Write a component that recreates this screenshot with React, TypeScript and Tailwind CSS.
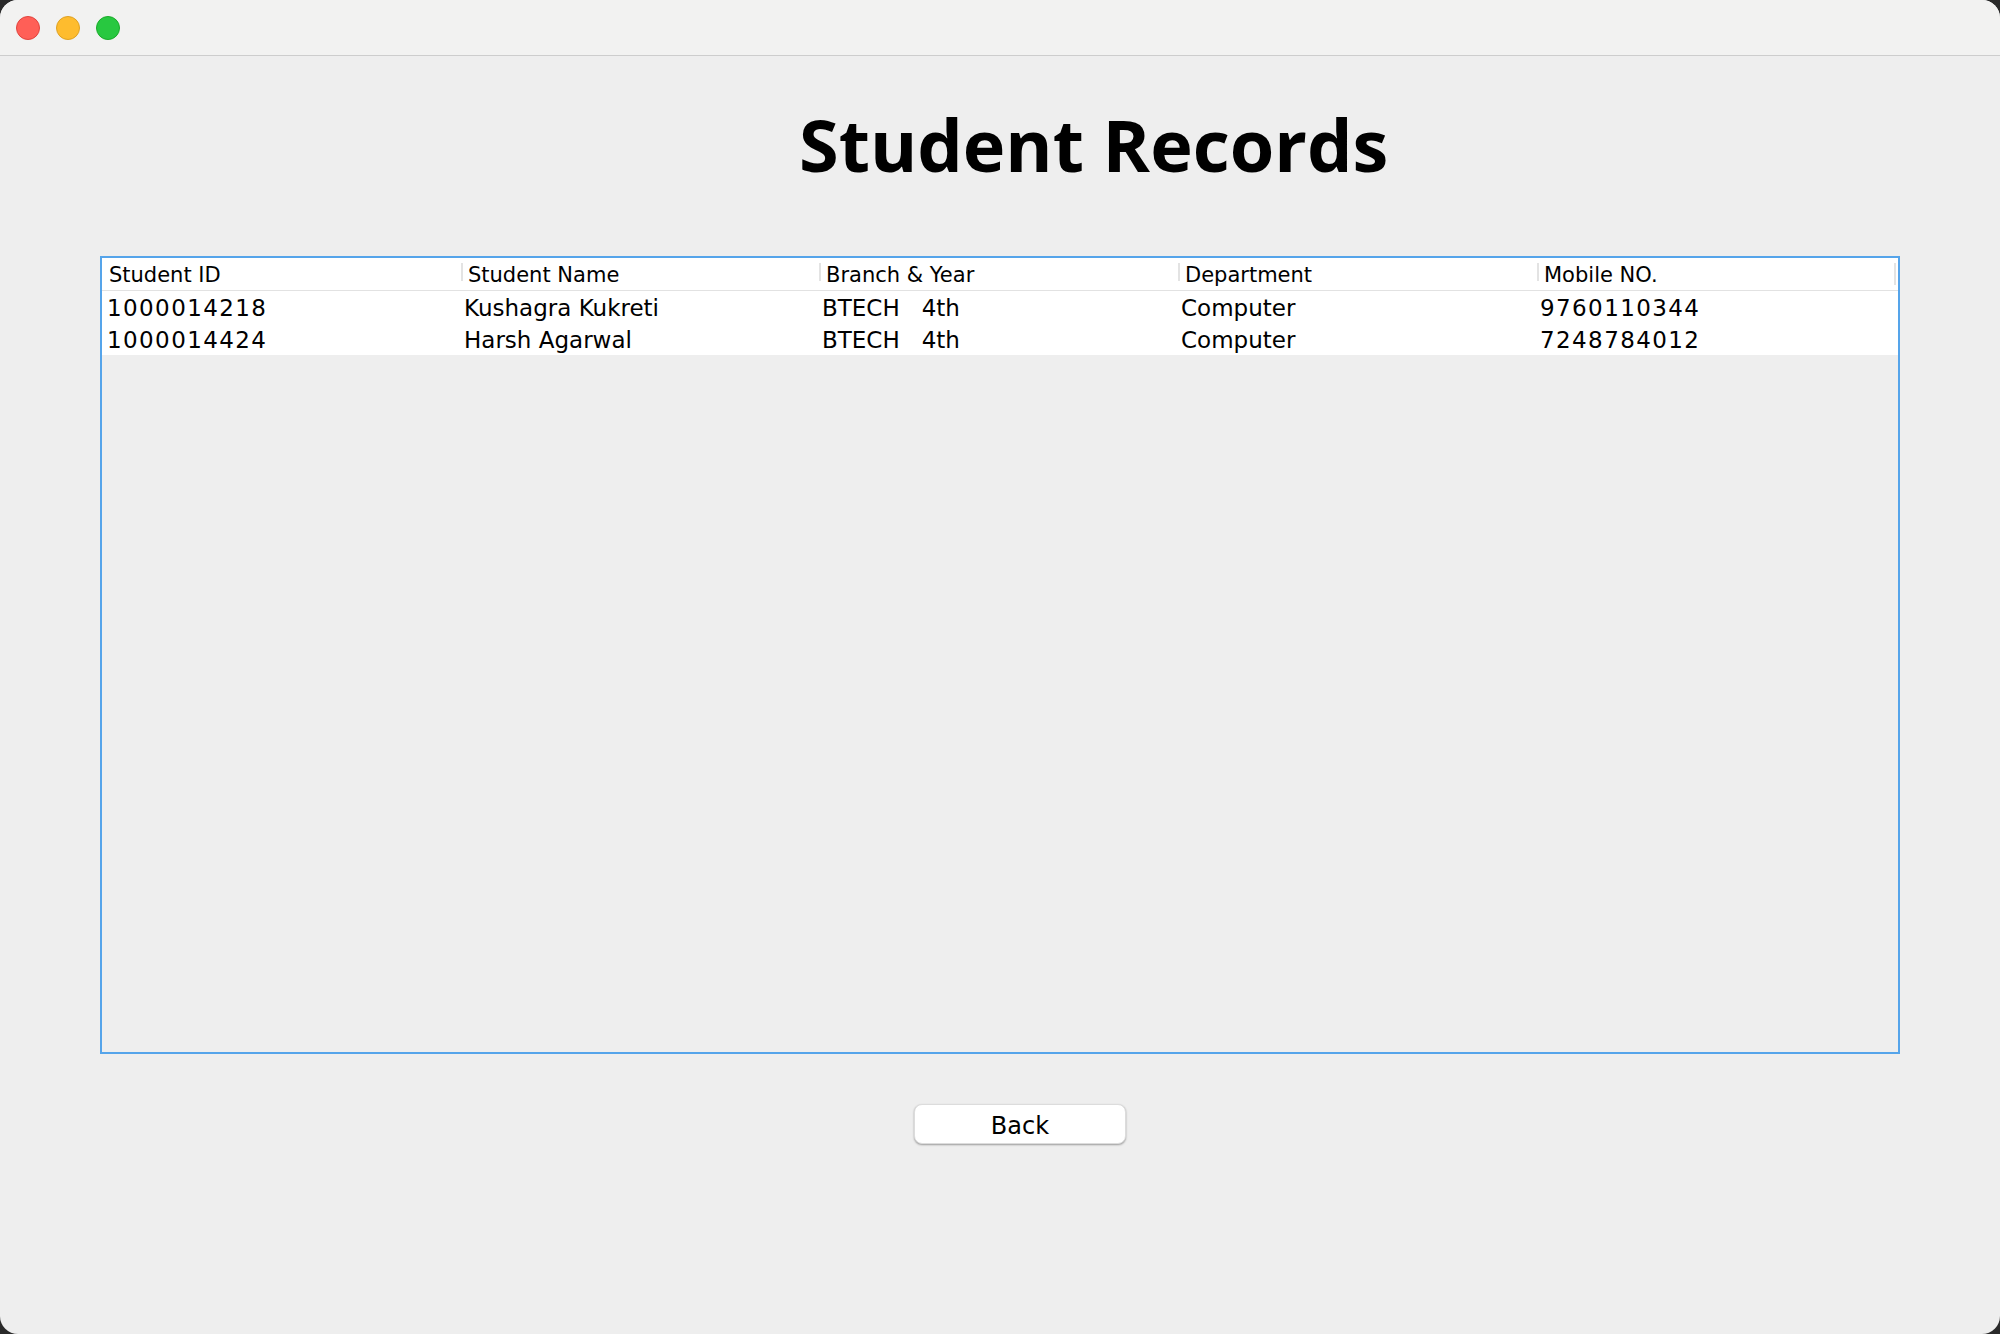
import React from "react";

const headers = ["Student ID", "Student Name", "Branch & Year", "Department", "Mobile NO."];
const rows = [
  ["1000014218", "Kushagra Kukreti", "BTECH   4th", "Computer", "9760110344"],
  ["1000014424", "Harsh Agarwal", "BTECH   4th", "Computer", "7248784012"],
];

export default function App() {
  return (
    <div className="w-[2000px] h-[1334px] bg-[#2a2a2a]">
      <div className="w-full h-full rounded-[18px] overflow-hidden bg-[#eeeeee] flex flex-col">
        {/* title bar */}
        <div className="h-[56px] shrink-0 bg-[#f2f2f1] border-b border-[#cdcdcd] flex items-center pl-[16px] gap-[16px]">
          <div className="w-[24px] h-[24px] rounded-full bg-[#ff5f57] border border-[#e0443e]" />
          <div className="w-[24px] h-[24px] rounded-full bg-[#febc2e] border border-[#dea123]" />
          <div className="w-[24px] h-[24px] rounded-full bg-[#28c840] border border-[#1aab29]" />
        </div>

        {/* heading */}
        <div className="mt-[52px] pl-[799px]">
          <h1
            className="text-[72px] leading-[72px] font-bold text-black whitespace-nowrap"
            style={{ fontFamily: '"Open Sans", "DejaVu Sans", sans-serif' }}
          >
            Student Records
          </h1>
        </div>

        {/* table */}
        <div
          className="mt-[76px] ml-[100px] w-[1800px] h-[798px] border-2 border-[#55a4ea] bg-[#eeeeee] text-black"
          style={{ fontFamily: '"DejaVu Sans", "Liberation Sans", sans-serif' }}
        >
          <div className="grid grid-cols-[359px_358px_359px_359px_1fr] h-[33px] bg-white border-b border-[#e2e2e2]">
            {headers.map((h, i) => (
              <div key={h} className="flex items-start">
                <div className={`w-[2px] h-[18px] mt-[5px] ${i === 0 ? "bg-transparent" : "bg-[#e3e3e3]"}`} />
                <span className="ml-[5px] text-[21px] leading-[34px] whitespace-nowrap">{h}</span>
                {i === headers.length - 1 && (
                  <div className="ml-auto mr-[2px] w-[2px] h-[22px] mt-[5px] bg-[#e3e3e3]" />
                )}
              </div>
            ))}
          </div>
          {rows.map((r, ri) => (
            <div key={ri} className="grid grid-cols-[359px_358px_359px_359px_1fr] h-[32px] bg-white">
              {r.map((c, ci) => (
                <div
                  key={ci}
                  className={`h-[32px] text-[23px] leading-[34px] whitespace-pre ${
                    ci === 0 ? "pl-[5px]" : "pl-[3px]"
                  } ${ci === 0 || ci === 4 ? "tracking-[1.4px]" : ""}`}
                >
                  {c}
                </div>
              ))}
            </div>
          ))}
        </div>

        {/* button */}
        <div className="mt-[50px] pl-[914px]">
          <button
            className="w-[212px] h-[40px] bg-white rounded-[8px] shadow-[0_1px_2px_rgba(0,0,0,0.35)] border border-[#dcdcdc] pt-[3px] text-[24px] leading-[34px] text-black"
            style={{ fontFamily: '"DejaVu Sans", "Liberation Sans", sans-serif' }}
          >
            Back
          </button>
        </div>
      </div>
    </div>
  );
}
